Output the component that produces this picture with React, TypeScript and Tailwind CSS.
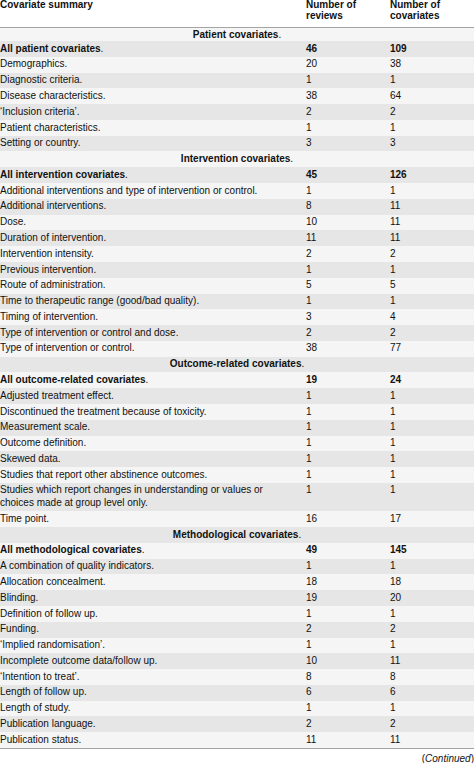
import { ReactNode } from "react";

// covariate summary table (continued page)

type Row =
  | { kind: "section"; label: string }
  | { kind: "total"; label: string; reviews: string; covariates: string }
  | { kind: "item"; label: string; reviews: string; covariates: string };

const rows: Row[] = [
  { kind: "section", label: "Patient covariates" },
  { kind: "total", label: "All patient covariates", reviews: "46", covariates: "109" },
  { kind: "item", label: "Demographics.", reviews: "20", covariates: "38" },
  { kind: "item", label: "Diagnostic criteria.", reviews: "1", covariates: "1" },
  { kind: "item", label: "Disease characteristics.", reviews: "38", covariates: "64" },
  { kind: "item", label: "\u2018Inclusion criteria\u2019.", reviews: "2", covariates: "2" },
  { kind: "item", label: "Patient characteristics.", reviews: "1", covariates: "1" },
  { kind: "item", label: "Setting or country.", reviews: "3", covariates: "3" },
  { kind: "section", label: "Intervention covariates" },
  { kind: "total", label: "All intervention covariates", reviews: "45", covariates: "126" },
  { kind: "item", label: "Additional interventions and type of intervention or control.", reviews: "1", covariates: "1" },
  { kind: "item", label: "Additional interventions.", reviews: "8", covariates: "11" },
  { kind: "item", label: "Dose.", reviews: "10", covariates: "11" },
  { kind: "item", label: "Duration of intervention.", reviews: "11", covariates: "11" },
  { kind: "item", label: "Intervention intensity.", reviews: "2", covariates: "2" },
  { kind: "item", label: "Previous intervention.", reviews: "1", covariates: "1" },
  { kind: "item", label: "Route of administration.", reviews: "5", covariates: "5" },
  { kind: "item", label: "Time to therapeutic range (good/bad quality).", reviews: "1", covariates: "1" },
  { kind: "item", label: "Timing of intervention.", reviews: "3", covariates: "4" },
  { kind: "item", label: "Type of intervention or control and dose.", reviews: "2", covariates: "2" },
  { kind: "item", label: "Type of intervention or control.", reviews: "38", covariates: "77" },
  { kind: "section", label: "Outcome-related covariates" },
  { kind: "total", label: "All outcome-related covariates", reviews: "19", covariates: "24" },
  { kind: "item", label: "Adjusted treatment effect.", reviews: "1", covariates: "1" },
  { kind: "item", label: "Discontinued the treatment because of toxicity.", reviews: "1", covariates: "1" },
  { kind: "item", label: "Measurement scale.", reviews: "1", covariates: "1" },
  { kind: "item", label: "Outcome definition.", reviews: "1", covariates: "1" },
  { kind: "item", label: "Skewed data.", reviews: "1", covariates: "1" },
  { kind: "item", label: "Studies that report other abstinence outcomes.", reviews: "1", covariates: "1" },
  { kind: "item", label: "Studies which report changes in understanding or values or choices made at group level only.", reviews: "1", covariates: "1" },
  { kind: "item", label: "Time point.", reviews: "16", covariates: "17" },
  { kind: "section", label: "Methodological covariates" },
  { kind: "total", label: "All methodological covariates", reviews: "49", covariates: "145" },
  { kind: "item", label: "A combination of quality indicators.", reviews: "1", covariates: "1" },
  { kind: "item", label: "Allocation concealment.", reviews: "18", covariates: "18" },
  { kind: "item", label: "Blinding.", reviews: "19", covariates: "20" },
  { kind: "item", label: "Definition of follow up.", reviews: "1", covariates: "1" },
  { kind: "item", label: "Funding.", reviews: "2", covariates: "2" },
  { kind: "item", label: "\u2018Implied randomisation\u2019.", reviews: "1", covariates: "1" },
  { kind: "item", label: "Incomplete outcome data/follow up.", reviews: "10", covariates: "11" },
  { kind: "item", label: "\u2018Intention to treat\u2019.", reviews: "8", covariates: "8" },
  { kind: "item", label: "Length of follow up.", reviews: "6", covariates: "6" },
  { kind: "item", label: "Length of study.", reviews: "1", covariates: "1" },
  { kind: "item", label: "Publication language.", reviews: "2", covariates: "2" },
  { kind: "item", label: "Publication status.", reviews: "11", covariates: "11" },
];

function TableRow({ row, index }: { row: Row; index: number }): ReactNode {
  const stripe = index % 2 === 1 ? "bg-[#e5e6e5]" : "bg-[#f4f5f4]";
  const first = index === 0 ? "py-0 leading-[13px]" : "py-[1.6px] leading-[12.6px]";

  if (row.kind === "section") {
    return (
      <div className={`${stripe} ${first} text-center`}>
        <span className="font-bold">{row.label}</span>.
      </div>
    );
  }

  return (
    <div className={`${stripe} ${first} grid grid-cols-[306px_84px_1fr]`}>
      <div className="pr-[18px]">
        {row.kind === "total" ? (
          <>
            <span className="font-bold">{row.label}</span>.
          </>
        ) : (
          row.label
        )}
      </div>
      <div className={row.kind === "total" ? "font-bold" : ""}>{row.reviews}</div>
      <div className={row.kind === "total" ? "font-bold" : ""}>{row.covariates}</div>
    </div>
  );
}

export default function App() {
  return (
    <div className="w-[474px] h-[763px] overflow-hidden bg-white text-[10px] text-[#111111] font-['Liberation_Sans',Arial,sans-serif]">
      <div className="h-[29px] border-b border-[#a5a5a5] grid grid-cols-[306px_84px_1fr] font-bold leading-[11px] -mt-px">
        <div>Covariate summary</div>
        <div>
          Number of
          <br />
          reviews
        </div>
        <div>
          Number of
          <br />
          covariates
        </div>
      </div>
      <div className="flex flex-col">
        {rows.map((row, i) => (
          <TableRow key={i} row={row} index={i} />
        ))}
      </div>
      <div className="border-t border-[#a5a5a5] pt-[3px] text-right leading-[13px]">
        (<span className="italic">Continued</span>)
      </div>
    </div>
  );
}
